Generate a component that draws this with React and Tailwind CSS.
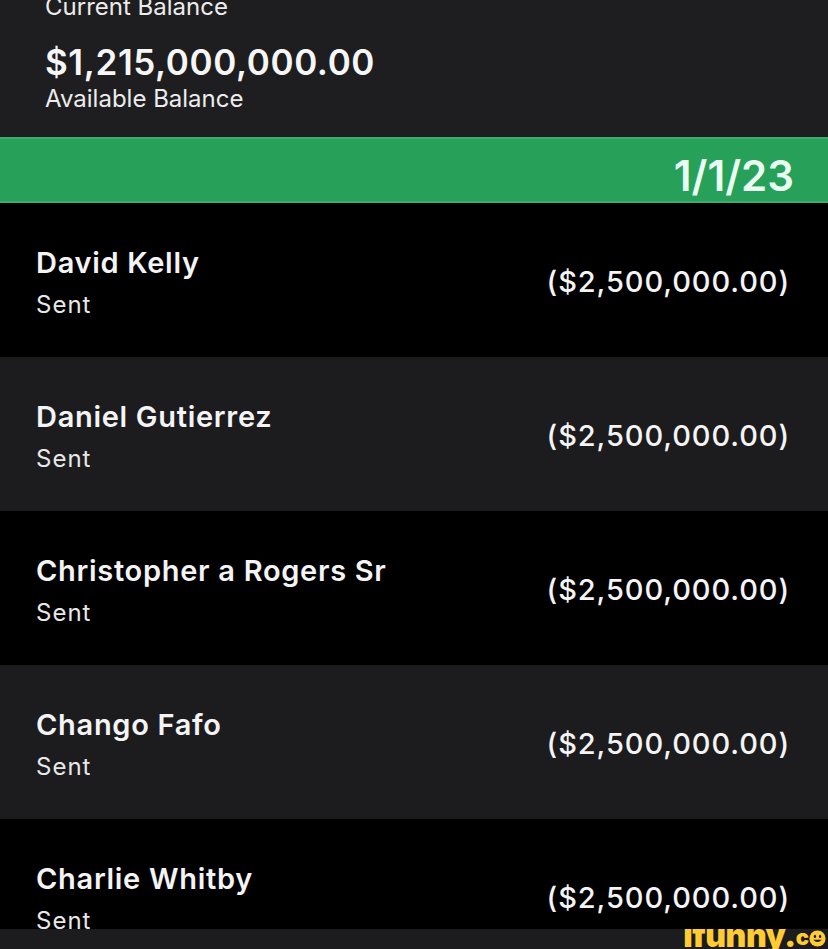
import React from 'react';

const rows = [
  { name: 'David Kelly', bg: 'bg-black' },
  { name: 'Daniel Gutierrez', bg: 'bg-[#1c1c1e]' },
  { name: 'Christopher a Rogers Sr', bg: 'bg-black' },
  { name: 'Chango Fafo', bg: 'bg-[#1c1c1e]' },
  { name: 'Charlie Whitby', bg: 'bg-black' },
];

function TxRow({ name, bg }) {
  return (
    <div className={`${bg} h-[154px] flex items-center justify-between pl-[36px] pr-[38px] pt-[4px] shrink-0`}>
      <div className="flex flex-col">
        <span className="text-[29px] leading-[34px] font-semibold text-[#f4f4f4] tracking-[0.7px]">{name}</span>
        <span className="text-[24px] leading-[28px] text-[#e8e8e8] mt-[11px] tracking-[1px]">Sent</span>
      </div>
      <span className="text-[29px] leading-[34px] font-medium text-[#f4f4f4] tracking-[0.9px]">($2,500,000.00)</span>
    </div>
  );
}

function Smiley() {
  return (
    <svg width="17" height="17" viewBox="0 0 20 20" className="mt-[1px]">
      <circle cx="10" cy="10" r="9.5" fill="#ffcc33" />
      <ellipse cx="7" cy="7.5" rx="1.4" ry="2" fill="#1c1c1e" />
      <ellipse cx="13" cy="7.5" rx="1.4" ry="2" fill="#1c1c1e" />
      <path d="M5 11.5 Q10 17 15 11.5 Z" fill="#1c1c1e" />
    </svg>
  );
}

export default function App() {
  return (
    <div className="w-[828px] h-[949px] overflow-hidden bg-black relative flex flex-col" style={{ fontFamily: 'Inter, "Noto Sans", sans-serif' }}>
      <div className="bg-[#1e1e20] h-[137px] shrink-0 pl-[45px] flex flex-col">
        <span className="text-[24px] leading-[28px] text-[#ececec] -mt-[7px]">Current Balance</span>
        <span className="text-[35px] leading-[40px] font-semibold text-[#f6f6f6] mt-[21px] tracking-[0.6px]">$1,215,000,000.00</span>
        <span className="text-[24px] leading-[28px] text-[#ececec] mt-[3px]">Available Balance</span>
      </div>
      <div className="bg-[#27a05a] h-[66px] shrink-0 flex items-center justify-end pr-[34px] pt-[12px] border-t-2 border-b-2 border-[#3aae6a]">
        <span className="text-[42px] leading-[44px] font-semibold text-[#eafff2]">1/1/23</span>
      </div>
      {rows.map((r) => (
        <TxRow key={r.name} {...r} />
      ))}
      <div className="absolute left-0 right-0 bottom-0 h-[20px] bg-[#1c1c1e] flex items-start justify-end pr-[2px] overflow-hidden">
        <span className="text-[32px] leading-[32px] font-black text-[#ffcc33] -mt-[9px] tracking-[-0.5px]">ifunny.</span>
        <span className="text-[22px] leading-[22px] font-black text-[#ffcc33] -mt-[3px]">c</span>
        <Smiley />
      </div>
    </div>
  );
}
